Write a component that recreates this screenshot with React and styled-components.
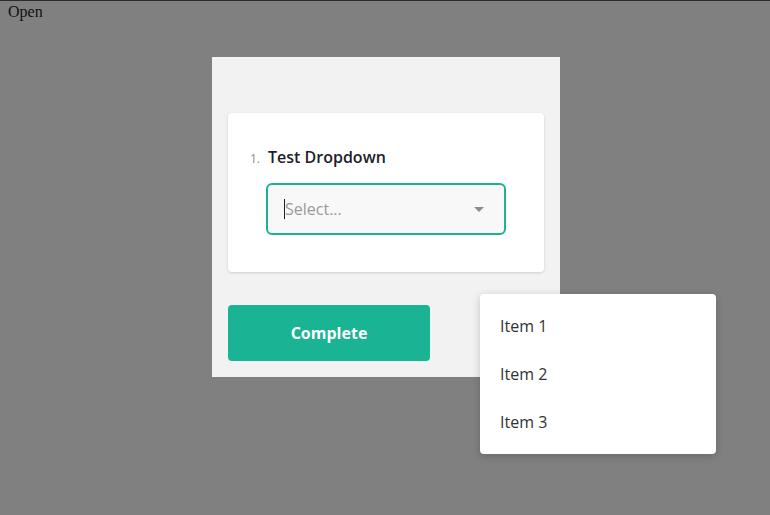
import styled, { createGlobalStyle } from "styled-components";

const Global = createGlobalStyle`
  html, body {
    margin: 0;
    padding: 0;
    background: #808080;
  }
  body {
    width: 770px;
    height: 515px;
    overflow: hidden;
  }
`

const Page = styled.div`
  position: relative;
  height: 515px;
  border-top: 1px solid #2a2a2a;
  box-sizing: border-box;
`

const OpenLabel = styled.div`
  font-family: "Liberation Serif", serif;
  font-size: 16px;
  line-height: 18px;
  color: #111;
  padding: 2px 0 0 8px;
`

const Panel = styled.div`
  width: 348px;
  margin: 36px 0 0 212px;
  background: #f2f2f2;
  padding: 56px 16px 16px;
  box-sizing: border-box;
  font-family: "Open Sans", sans-serif;
`

const Card = styled.div`
  background: #fff;
  border-radius: 4px;
  box-shadow: 0 1px 3px rgba(0, 0, 0, 0.15);
  padding: 33px 38px 37px 22px;
`

const Title = styled.div`
  display: flex;
  align-items: baseline;
  gap: 8px;
  margin-bottom: 15px;
`

const Number = styled.span`
  font-size: 12px;
  color: #8a8a8a;
`

const TitleText = styled.span`
  font-size: 16px;
  font-weight: 600;
  color: #1d1d2b;
`

const Select = styled.div`
  margin-left: 16px;
  height: 52px;
  border: 2px solid #1ab394;
  border-radius: 6px;
  background: #f8f8f8;
  box-sizing: border-box;
  display: flex;
  align-items: center;
  padding: 0 20px 0 16px;
`

const Placeholder = styled.span`
  flex: 1;
  font-size: 16px;
  color: #9a9a9a;
  border-left: 1px solid #222;
  line-height: 20px;
`

const Arrow = styled.span`
  width: 0;
  height: 0;
  border-left: 5px solid transparent;
  border-right: 5px solid transparent;
  border-top: 5px solid #8c8c8c;
`

const Button = styled.button`
  display: block;
  margin-top: 33px;
  width: 202px;
  height: 56px;
  border: none;
  border-radius: 4px;
  background: #1ab394;
  color: #fff;
  font-family: "Open Sans", sans-serif;
  font-size: 16px;
  font-weight: 700;
`

const Menu = styled.ul`
  position: absolute;
  left: 480px;
  top: 293px;
  width: 236px;
  margin: 0;
  padding: 8px 0;
  list-style: none;
  background: #fff;
  border-radius: 4px;
  box-shadow: 0 2px 8px rgba(0, 0, 0, 0.2);
  font-family: "Open Sans", sans-serif;
`

const MenuItem = styled.li`
  height: 48px;
  line-height: 48px;
  padding: 0 20px;
  font-size: 16px;
  color: #333;
`

export default function App() {
  return (
    <Page>
      <Global />
      <OpenLabel>Open</OpenLabel>
      <Panel>
        <Card>
          <Title>
            <Number>1.</Number>
            <TitleText>Test Dropdown</TitleText>
          </Title>
          <Select>
            <Placeholder>Select...</Placeholder>
            <Arrow />
          </Select>
        </Card>
        <Button>Complete</Button>
      </Panel>
      <Menu>
        <MenuItem>Item 1</MenuItem>
        <MenuItem>Item 2</MenuItem>
        <MenuItem>Item 3</MenuItem>
      </Menu>
    </Page>
  )
}
